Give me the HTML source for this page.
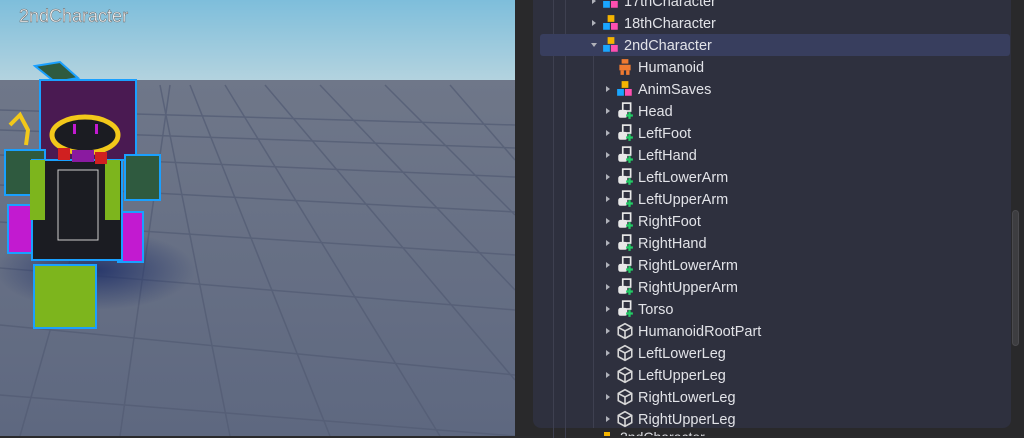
<!DOCTYPE html>
<html><head><style>
*{margin:0;padding:0;box-sizing:border-box}
body{width:1024px;height:436px;overflow:hidden;background:#2a2a2c;position:relative;font-family:"Liberation Sans","DejaVu Sans",sans-serif}
#vp{position:absolute;left:0;top:0;width:515px;height:436px;overflow:hidden}
#side{position:absolute;left:515px;top:0;width:509px;height:436px;background:#29292b}
#panel{position:absolute;left:533px;top:-10px;width:478px;height:438px;background:#2e303e;border-radius:8px}
.vl{position:absolute;top:0;width:1px;background:#3e4050}
.row{position:absolute;left:0;height:22px;line-height:22px;color:#e2e3e8;font-size:14.5px;white-space:nowrap}
.arr{position:absolute;width:0;height:0;border-top:3px solid transparent;border-bottom:3px solid transparent;border-left:4px solid #b0b2ba;top:8px}
.ic{position:absolute;top:2px;width:18px;height:18px}
.t{position:absolute;top:1px}
</style></head><body>
<div id="vp">
<svg width="515" height="436" viewBox="0 0 515 436">
<defs>
<linearGradient id="sky" x1="0" y1="0" x2="0" y2="1"><stop offset="0" stop-color="#7ebedb"/><stop offset="1" stop-color="#b3d3df"/></linearGradient>
<linearGradient id="gr" x1="0" y1="0" x2="0" y2="1"><stop offset="0" stop-color="#6f7789"/><stop offset="1" stop-color="#5e6880"/></linearGradient>
<radialGradient id="sh" cx="0.5" cy="0.5" r="0.5"><stop offset="0" stop-color="#25356a" stop-opacity=".95"/><stop offset="1" stop-color="#25356a" stop-opacity="0"/></radialGradient>
</defs>
<rect width="515" height="80" fill="url(#sky)"/>
<rect y="80" width="515" height="356" fill="url(#gr)"/>
<g stroke="#535c74" stroke-width="1.5" opacity=".75">
<line x1="0" y1="110" x2="515" y2="125"/><line x1="0" y1="130" x2="515" y2="148"/><line x1="0" y1="155" x2="515" y2="177"/><line x1="0" y1="185" x2="515" y2="212"/><line x1="0" y1="222" x2="515" y2="255"/><line x1="0" y1="268" x2="515" y2="310"/><line x1="0" y1="325" x2="515" y2="375"/><line x1="0" y1="395" x2="515" y2="436"/>
<line x1="20" y1="436" x2="120" y2="85"/><line x1="120" y1="436" x2="170" y2="85"/><line x1="230" y1="436" x2="160" y2="85"/><line x1="330" y1="436" x2="190" y2="85"/><line x1="440" y1="436" x2="225" y2="85"/><line x1="515" y1="380" x2="265" y2="85"/><line x1="515" y1="290" x2="320" y2="85"/><line x1="515" y1="215" x2="385" y2="85"/><line x1="515" y1="160" x2="450" y2="85"/>
</g>
<ellipse cx="95" cy="270" rx="100" ry="40" fill="url(#sh)"/>
<g stroke="#1aa0ff" stroke-width="2">
<polygon points="35,66 60,62 78,78 55,82" fill="#2f5a3f"/>
<rect x="40" y="80" width="96" height="80" fill="#4a1a52"/>
<rect x="5" y="150" width="40" height="45" fill="#2f5a3f"/>
<rect x="125" y="155" width="35" height="45" fill="#2f5a3f"/>
<rect x="8" y="205" width="25" height="48" fill="#c21ad0"/>
<rect x="118" y="212" width="25" height="50" fill="#c21ad0"/>
<rect x="32" y="160" width="90" height="100" fill="#1b1c22"/>
<rect x="34" y="265" width="62" height="63" fill="#7db51d"/>
</g>
<rect x="30" y="160" width="15" height="60" fill="#7db51d"/>
<rect x="105" y="160" width="15" height="60" fill="#7db51d"/>
<rect x="58" y="170" width="40" height="70" fill="none" stroke="#ccc" stroke-width="1"/>
<ellipse cx="85" cy="135" rx="33" ry="18" fill="#1b1c22" stroke="#f2c81a" stroke-width="5"/>
<rect x="73" y="124" width="3" height="10" fill="#c21ad0"/><rect x="95" y="124" width="3" height="10" fill="#c21ad0"/>
<rect x="58" y="148" width="12" height="12" fill="#d02020"/><rect x="95" y="152" width="12" height="12" fill="#d02020"/>
<rect x="72" y="150" width="22" height="12" fill="#8a1aa0"/>
<path d="M10 125 L20 115 L28 130 L26 145" stroke="#f2c81a" stroke-width="4" fill="none"/>
<text x="19" y="22" font-family="Liberation Sans,sans-serif" font-size="18" fill="#f6f7f9" stroke="#666" stroke-width=".5">2ndCharacter</text>
</svg>
</div>
<div id="side"></div>
<div id="panel">
<div class="vl" style="left:20px;height:448px"></div>
<div class="vl" style="left:32px;height:448px"></div>
<div class="vl" style="left:60px;top:66px;height:372px"></div>
</div>
<div style="position:absolute;left:540px;top:34px;width:470px;height:22px;background:#383e5e;border-radius:3px"></div>
<div style="position:absolute;left:1012px;top:210px;width:7px;height:136px;background:#3d3d40;border:1px solid #4a4a4e;border-radius:4px"></div>
<div style="position:absolute;left:533px;top:0;width:478px;height:428px;overflow:hidden">
<div id="rows"></div>
</div>
<div style="position:absolute;left:604px;top:431px;width:110px;height:5px;overflow:hidden;color:#dadbe0;font-size:14px;line-height:14px"><div style="position:absolute;left:0;top:1px;width:6px;height:6px;background:#f5b400"></div><div style="margin-top:-1px;margin-left:16px">2ndCharacter</div></div>
<script>
var rows=[["17thCharacter",1,"m",0],["18thCharacter",23,"m",0],["2ndCharacter",45,"m",0,1],["Humanoid",67,"h",1,0,1],["AnimSaves",89,"m",1],["Head",111,"p",1],["LeftFoot",133,"p",1],["LeftHand",155,"p",1],["LeftLowerArm",177,"p",1],["LeftUpperArm",199,"p",1],["RightFoot",221,"p",1],["RightHand",243,"p",1],["RightLowerArm",265,"p",1],["RightUpperArm",287,"p",1],["Torso",309,"p",1],["HumanoidRootPart",331,"c",1],["LeftLowerLeg",353,"c",1],["LeftUpperLeg",375,"c",1],["RightLowerLeg",397,"c",1],["RightUpperLeg",419,"c",1]];
var icons={
m:'<svg class="ic" viewBox="0 0 16 16"><rect x="5" y="1" width="6" height="6" fill="#f5b400"/><rect x="1" y="8" width="6" height="6" fill="#1aa6ff"/><rect x="8" y="8" width="6" height="6" fill="#ff4fb0"/></svg>',
h:'<svg class="ic" viewBox="0 0 16 16" fill="#f07a30"><rect x="5" y="1" width="6" height="4"/><rect x="3" y="6" width="10" height="5"/><rect x="4" y="11" width="3" height="4"/><rect x="9" y="11" width="3" height="4"/></svg>',
p:'<svg class="ic" viewBox="0 0 16 16"><rect x="6" y="1" width="7" height="7" fill="none" stroke="#e8e8e8" stroke-width="1.5"/><rect x="2" y="7" width="8" height="7" rx="2" fill="#e8e8e8"/><path d="M12 9v6M9 12h6" stroke="#22cc66" stroke-width="2"/></svg>',
c:'<svg class="ic" viewBox="0 0 16 16" fill="none" stroke="#d8d8d8" stroke-width="1.4"><path d="M8 1.5 14 4.8v6.4L8 14.5 2 11.2V4.8z M2 4.8 8 8l6-3.2 M8 8v6.5"/></svg>'};
var h="";
rows.forEach(function(r){
 var ind=r[3]?14:0, top=r[1]-11;
 var arr=r[5]?'':(r[4]?'<div class="arr" style="left:'+(58+ind)+'px;top:9px;border-left:3px solid transparent;border-right:3px solid transparent;border-top:4px solid #b0b2ba;border-bottom:0"></div>':'<div class="arr" style="left:'+(59+ind)+'px"></div>');
 h+='<div class="row" style="top:'+top+'px;width:478px">'+arr+'<div style="position:absolute;left:'+(69+ind)+'px">'+icons[r[2]].replace('class="ic"','class="ic" style="left:0"')+'</div><span class="t" style="left:'+(91+ind)+'px">'+r[0]+'</span></div>';
});
document.getElementById("rows").innerHTML=h;
</script>
</body></html>
